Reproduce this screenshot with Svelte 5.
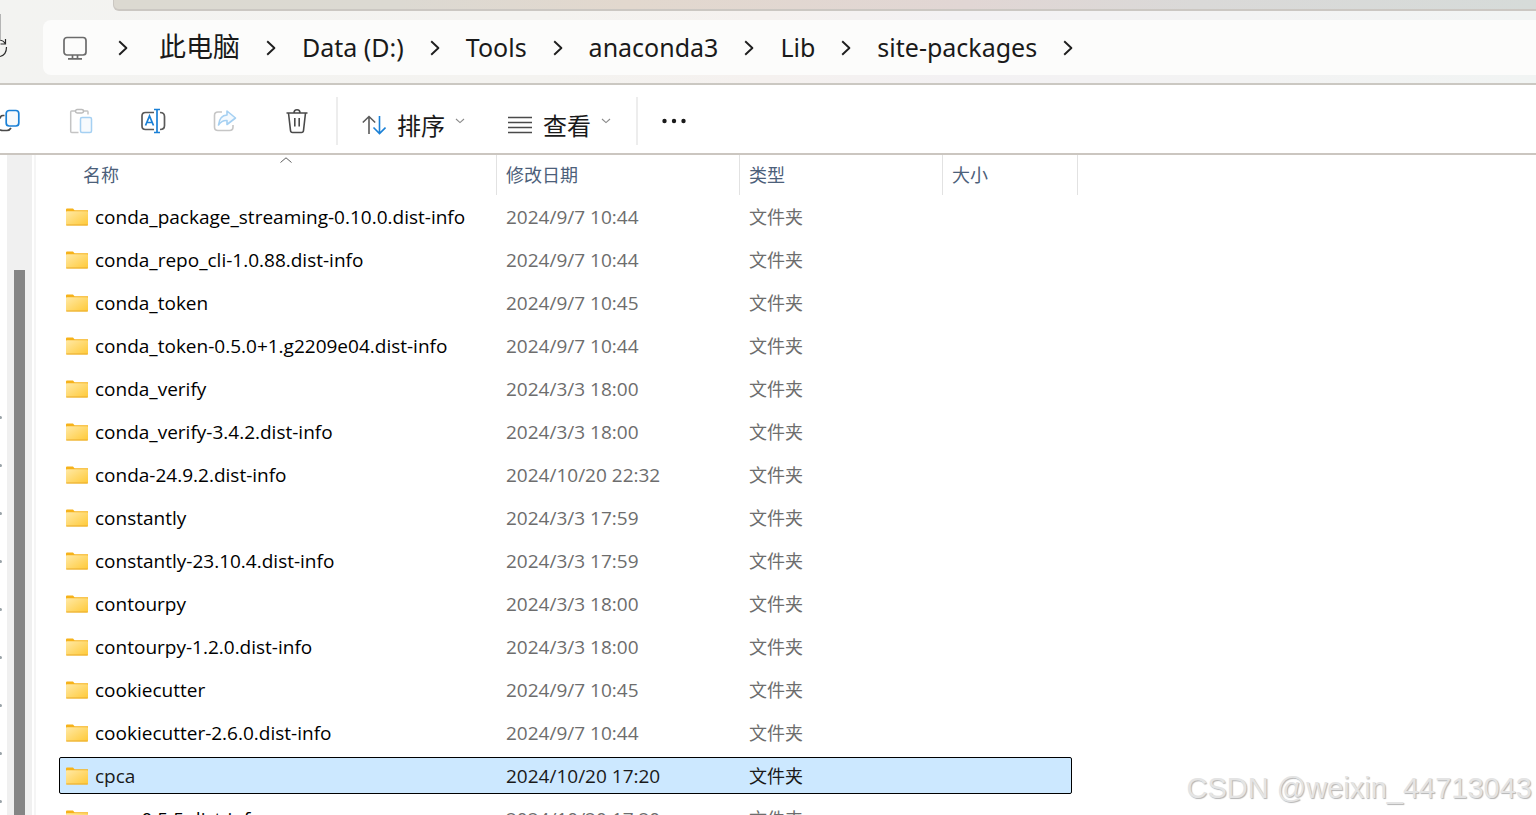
<script lang="ts">
  type Entry = { name: string; date: string };

  const crumbs = ['此电脑', 'Data (D:)', 'Tools', 'anaconda3', 'Lib', 'site-packages'];

  const entries: Entry[] = [
    { name: 'conda_package_streaming-0.10.0.dist-info', date: '2024/9/7 10:44' },
    { name: 'conda_repo_cli-1.0.88.dist-info', date: '2024/9/7 10:44' },
    { name: 'conda_token', date: '2024/9/7 10:45' },
    { name: 'conda_token-0.5.0+1.g2209e04.dist-info', date: '2024/9/7 10:44' },
    { name: 'conda_verify', date: '2024/3/3 18:00' },
    { name: 'conda_verify-3.4.2.dist-info', date: '2024/3/3 18:00' },
    { name: 'conda-24.9.2.dist-info', date: '2024/10/20 22:32' },
    { name: 'constantly', date: '2024/3/3 17:59' },
    { name: 'constantly-23.10.4.dist-info', date: '2024/3/3 17:59' },
    { name: 'contourpy', date: '2024/3/3 18:00' },
    { name: 'contourpy-1.2.0.dist-info', date: '2024/3/3 18:00' },
    { name: 'cookiecutter', date: '2024/9/7 10:45' },
    { name: 'cookiecutter-2.6.0.dist-info', date: '2024/9/7 10:44' },
    { name: 'cpca', date: '2024/10/20 17:20' },
    { name: 'cpca-0.5.5.dist-info', date: '2024/10/20 17:20' }
  ];

  let selected = $state('cpca');
</script>

{#snippet chevron()}
  <svg class="chevron" width="10" height="16" viewBox="0 0 10 16" aria-hidden="true">
    <path d="M1.2 1.2 8.4 8 1.2 14.8" fill="none" stroke="#1f1f1f" stroke-width="1.9" stroke-linejoin="round" />
  </svg>
{/snippet}

{#snippet caret()}
  <svg class="caret" width="10" height="6" viewBox="0 0 10 6" aria-hidden="true">
    <path d="M1 1 5 4.6 9 1" fill="none" stroke="#8a8a8a" stroke-width="1.1" />
  </svg>
{/snippet}

<div class="window">
  <header>
    <div class="tab-edge"></div>
    <div class="address-row">
      <button class="refresh" aria-label="刷新">
        <svg width="9" height="44" viewBox="0 0 9 44" fill="none">
          <path d="M0 0V25" stroke="#b5b5b5" stroke-width="2" />
          <path d="M0 26Q3.500 26.500 5.300 29.500M5.500 25V30H0.500" stroke="#2a2a2a" stroke-width="1.2" />
          <path d="M6.500 33Q6.500 41 0 42.500" stroke="#2a2a2a" stroke-width="1.2" />
        </svg>
      </button>
      <nav class="address" aria-label="地址栏">
        <svg class="pc" width="24" height="24" viewBox="0 0 24 24" fill="none" stroke="#6b6b6b" stroke-width="1.7">
          <rect x="1" y="1.500" width="22" height="17.500" rx="3" />
          <path d="M9.500 19V22.500M14.500 19V22.500M5 22.800H19" />
        </svg>
        <span class="root-chevron">{@render chevron()}</span>
        {#each crumbs as crumb, i}
          <a href="#top" class:root={i === 0}>{crumb}</a>
          {@render chevron()}
        {/each}
      </nav>
    </div>
  </header>

  <div class="toolbar" role="toolbar" aria-label="命令栏">
    <button class="icon" aria-label="复制">
      <svg width="24" height="26" viewBox="0 0 24 26" fill="none" stroke-width="1.7">
        <path d="M7.500 7.500H6Q3.500 7.500 3 10.500M3 21.800Q4 22.500 6 22.500H10Q12.500 22.500 14 20" stroke="#4a4a4a" />
        <rect x="9.200" y="2.500" width="12.600" height="15.500" rx="3" stroke="#1a80d6" fill="#f7fafc" />
      </svg>
    </button>
    <button class="icon" aria-label="粘贴" disabled>
      <svg width="24" height="26" viewBox="0 0 24 26" fill="none" stroke-width="1.5">
        <path d="M7 3H2.700Q1.700 3 1.700 4V23.500Q1.700 24.500 2.700 24.500H9.500M14 3H18.300Q19 3 19 4V6.500" stroke="#c4c4c4" />
        <rect x="6.500" y="1.500" width="8" height="3.500" rx="1.700" stroke="#bcbcbc" />
        <rect x="11.500" y="9.500" width="11" height="15" rx="1.500" stroke="#a5d0f2" fill="#f7fafd" />
      </svg>
    </button>
    <button class="icon" aria-label="重命名">
      <svg width="26" height="26" viewBox="0 0 26 26" fill="none" stroke-width="1.7">
        <path d="M14 4.500H5.500Q2 4.500 2 8V18Q2 21.500 5.500 21.500H14M20 4.500Q24.500 4.500 24.500 8.500V17.500Q24.500 21.500 20 21.500" stroke="#5a5a5a" />
        <path d="M5.500 17.500 9.500 8 13.500 17.500M7 14.500H12M14 1.500H20M14 24.500H20M17 1.500V24.500" stroke="#1a80d6" />
      </svg>
    </button>
    <button class="icon" aria-label="共享" disabled>
      <svg width="24" height="26" viewBox="0 0 24 26" fill="none" stroke-width="1.6" stroke-linejoin="round">
        <path d="M9 4H5Q1.500 4 1.500 7.500V19Q1.500 22.500 5 22.500H16.500Q20 22.500 20 19V17" stroke="#c6c6c6" />
        <path d="M14 3 22.500 10 14 16.500V12.500Q9 12 5.500 17Q6.500 7.500 14 7Z" stroke="#a5d0f2" fill="#f3f9fe" />
      </svg>
    </button>
    <button class="icon" aria-label="删除">
      <svg width="24" height="26" viewBox="0 0 24 26" fill="none" stroke="#4a4a4a" stroke-width="1.6">
        <path d="M1.500 5H22.500M9 5Q9 1.800 12 1.800Q15 1.800 15 5M3.500 5 5.500 22.500Q5.700 24.500 7.500 24.500H16.500Q18.300 24.500 18.500 22.500L20.500 5M9.800 10V18.500M14.200 10V18.500" />
      </svg>
    </button>
    <span class="divider"></span>
    <button class="menu">
      <svg width="24" height="20" viewBox="0 0 24 20" fill="none" stroke-width="1.6">
        <path d="M7 19V1.500M0.800 7.500 7 1.500 13.200 7.500" stroke="#5a5a5a" />
        <path d="M17.500 1V18.500M11.500 12.500 17.500 18.500 23.500 12.500" stroke="#1a80d6" />
      </svg>
      <span>排序</span>
      {@render caret()}
    </button>
    <button class="menu">
      <svg width="24" height="20" viewBox="0 0 24 20" fill="none" stroke="#4a4a4a" stroke-width="1.4">
        <path d="M0 2.500H24M0 7.500H24M0 12.500H24M0 17.500H24" />
      </svg>
      <span>查看</span>
      {@render caret()}
    </button>
    <span class="divider"></span>
    <button class="more" aria-label="查看更多">
      <svg width="24" height="6" viewBox="0 0 24 6" fill="#1a1a1a">
        <circle cx="2.500" cy="3" r="2.200" />
        <circle cx="12" cy="3" r="2.200" />
        <circle cx="21.500" cy="3" r="2.200" />
      </svg>
    </button>
  </div>

  <div class="body">
    <aside class="tree">
      {#each Array(9) as _}
        <span></span>
      {/each}
    </aside>
    <div class="scrollbar"><div class="thumb"></div></div>
    <main>
      <table>
        <thead>
          <tr>
            <th class="name">
              <svg class="sorted" width="12" height="6" viewBox="0 0 12 6" aria-hidden="true">
                <path d="M0.500 5.500 6 0.800 11.500 5.500" fill="none" stroke="#5f5f5f" />
              </svg>
              名称
            </th>
            <th>修改日期</th>
            <th>类型</th>
            <th>大小</th>
          </tr>
        </thead>
        <tbody>
          {#each entries as entry (entry.name)}
            <tr class:selected={selected === entry.name} onclick={() => (selected = entry.name)}>
              <td class="name">
                <svg width="22" height="18" viewBox="0 0 22 18" aria-hidden="true">
                  <defs>
                    <linearGradient id="folder" x1="0" y1="0" x2="1" y2="1">
                      <stop offset="0" stop-color="#ffe9a6" />
                      <stop offset="1" stop-color="#ffc936" />
                    </linearGradient>
                  </defs>
                  <path d="M0 1.500Q0 0.500 1 0.500H7L8.500 2.200H22V8H0Z" fill="#f6b21a" />
                  <rect y="3.200" width="22" height="14.300" rx="0.800" fill="url(#folder)" />
                  <path d="M0.300 17H21.700" stroke="#e9ab2c" />
                </svg>
                {entry.name}
              </td>
              <td>{entry.date}</td>
              <td class="kind">文件夹</td>
              <td></td>
            </tr>
          {/each}
        </tbody>
      </table>
    </main>
  </div>

  <div class="watermark">CSDN @weixin_44713043</div>
</div>

<style>
  :global(body) {
    margin: 0;
    background: #fff;
  }

  .window {
    position: relative;
    display: flex;
    flex-direction: column;
    height: 100vh;
    overflow: hidden;
    font-family: 'Open Sans', 'Noto Sans CJK SC', sans-serif;
    color: #1a1a1a;
  }

  button {
    display: flex;
    align-items: center;
    padding: 0;
    border: 0;
    background: none;
    font: inherit;
    color: inherit;
  }

  header {
    flex: none;
    background: linear-gradient(90deg, #f3f3f1, #f4f3f0 35%, #f5f1ef 50%, #f3f1f3 62%, #f3f3f3 80%, #f1f4f3);
    border-bottom: 2px solid #cbc8c2;
  }

  .tab-edge {
    height: 9px;
    margin-left: 113px;
    border-bottom: 2px solid #cbc7c2;
    border-left: 1px solid #cbc7c2;
    border-bottom-left-radius: 6px;
    background: linear-gradient(90deg, #dcd9d1, #dcd9d2 20%, #e2d8ce 36%, #e1d6d4 60%, #dad9d8 76%, #d6dbd9);
  }

  .address-row {
    display: flex;
    align-items: flex-start;
    padding: 9px 0 8px;
  }

  .refresh {
    width: 43px;
    height: 44px;
    margin-top: -6px;
  }

  .address {
    flex: 1;
    display: flex;
    align-items: center;
    gap: 26px;
    height: 55px;
    padding-left: 20px;
    border-radius: 8px 0 0 8px;
    background: #fcfcfb;
    font-family: 'Noto Sans', 'Noto Sans CJK SC', sans-serif;
    font-size: 25px;
    line-height: 32px;
    white-space: nowrap;
  }

  .address a {
    padding-bottom: 1px;
    color: inherit;
    text-decoration: none;
  }

  .address .root {
    font-size: 27px;
  }

  .root-chevron {
    display: flex;
    margin: 0 5px;
  }

  .toolbar {
    flex: none;
    display: flex;
    align-items: center;
    height: 64px;
    margin-left: -27px;
    padding-top: 4px;
    border-bottom: 2px solid #cbc6c0;
    background: #fff;
  }

  .icon {
    justify-content: center;
    width: 72px;
    height: 48px;
  }

  .divider {
    width: 2px;
    height: 48px;
    margin-left: 3px;
    background: #ededed;
  }

  .menu {
    gap: 11px;
    height: 48px;
    margin-left: 24px;
    padding-top: 8px;
    font-size: 24px;
    line-height: 32px;
  }

  .menu + .menu {
    margin-left: 43px;
    margin-right: 22px;
  }

  .menu span {
    padding-top: 2px;
  }

  .caret {
    margin: 0 0 8px -1px;
  }

  .more {
    margin-left: 24px;
  }

  .body {
    flex: 1;
    display: flex;
    min-height: 0;
  }

  .tree {
    display: flex;
    flex-direction: column;
    gap: 45px;
    width: 7px;
    padding-top: 261px;
  }

  .tree span {
    flex: none;
    width: 2px;
    height: 3px;
    border-radius: 0 2px 2px 0;
    background: #9aa3a8;
  }

  .scrollbar {
    width: 25px;
    box-sizing: border-box;
    padding: 115px 7px 0;
    background: #f0f0f0;
  }

  .thumb {
    height: 100%;
    background: #858585;
  }

  main {
    flex: 1;
    margin-left: 2px;
    padding-left: 23px;
    border-left: 2px solid #f5f5f5;
  }

  table {
    display: block;
    width: 1013px;
    font-size: 19px;
    line-height: 24px;
  }

  thead,
  tbody {
    display: block;
  }

  tr {
    display: grid;
    grid-template-columns: 437px 243px 203px 1fr;
    box-sizing: border-box;
    height: 37px;
    margin-bottom: 6px;
    border: 1px solid transparent;
    border-radius: 2px;
  }

  thead tr {
    grid-template-columns: 438px 243px 203px 1fr;
    width: 1019px;
    height: 40px;
    margin-bottom: 3px;
    border-width: 0;
  }

  th {
    position: relative;
    padding: 8px 9px 0;
    border-right: 1px solid #e2e2e2;
    color: #4c607a;
    font-size: 18px;
    font-weight: 400;
    text-align: left;
  }

  th.name {
    padding-left: 24px;
  }

  .sorted {
    position: absolute;
    top: 2px;
    left: calc(50% + 2px);
  }

  td {
    display: flex;
    align-items: center;
    padding: 0 9px;
    color: #6d6d6d;
    white-space: nowrap;
  }

  td.name {
    gap: 7px;
    padding-left: 6px;
    color: #000;
  }

  td.kind {
    font-size: 18px;
  }

  .selected {
    border-color: #000;
    background: #cce8ff;
  }

  .selected td {
    color: #1a1a1a;
  }

  .watermark {
    position: absolute;
    right: 4px;
    bottom: 9px;
    font-family: 'Liberation Sans', sans-serif;
    font-size: 29px;
    line-height: 36px;
    color: #e4e4e4;
    text-shadow: 1px 1px 1px #b4b4b4;
  }
</style>
